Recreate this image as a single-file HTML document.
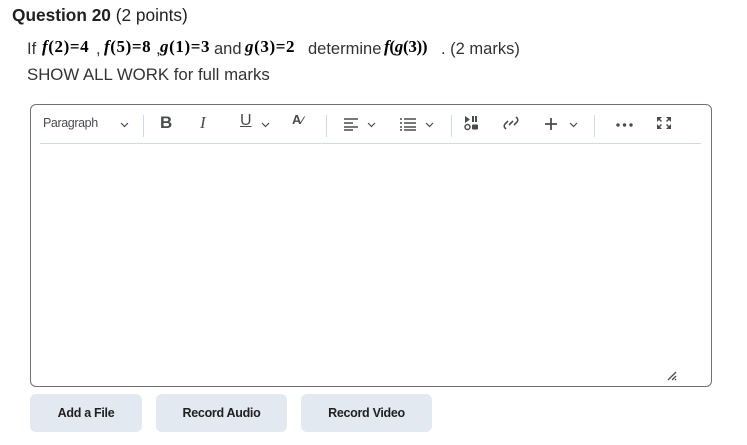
<!DOCTYPE html>
<html><head><meta charset="utf-8"><style>
*{margin:0;padding:0;box-sizing:border-box}
body{width:747px;height:445px;background:#fff;font-family:"Liberation Sans",sans-serif;color:#202122;position:relative;overflow:hidden}
.abs{position:absolute;white-space:nowrap}
.t{position:absolute;white-space:nowrap;top:40px;font-size:16.5px;color:#333}
.m{position:absolute;white-space:nowrap;top:37px;font-family:"Liberation Serif",serif;font-weight:bold;font-size:17px;color:#000;letter-spacing:0.6px}
.m i{font-style:italic}
.ed{position:absolute;left:30px;top:104px;width:682px;height:283px;border:1px solid #6e7376;border-radius:6px}
.sep{position:absolute;top:115px;width:1px;height:22px;background:#d3d9e3}
.btn{position:absolute;top:394px;height:38px;background:#e3e9f1;border-radius:6px;font-size:12.5px;font-weight:bold;color:#202122;display:flex;align-items:center;justify-content:center;letter-spacing:-0.3px}
.ic{position:absolute;color:#494c4e}
.ch{position:absolute;top:122px}
</style></head><body>
<div class="abs" style="left:12px;top:5px;font-size:17.3px"><b>Question 20</b> (2 points)</div>
<div class="t" style="left:27px">If</div>
<div class="m" style="left:42px"><i>f</i>(2)=4</div>
<div class="t" style="left:96px">,</div>
<div class="m" style="left:104px"><i>f</i>(5)=8</div>
<div class="t" style="left:156px">,</div>
<div class="m" style="left:160px"><i>g</i>(1)=3</div>
<div class="t" style="left:214px">and</div>
<div class="m" style="left:245px"><i>g</i>(3)=2</div>
<div class="t" style="left:308px">determine</div>
<div class="m" style="left:384px;letter-spacing:-0.3px"><i>f</i>(<i>g</i>(3))</div>
<div class="t" style="left:441px">. (2 marks)</div>
<div class="abs" style="left:27px;top:65px;font-size:16.8px;color:#333">SHOW ALL WORK for full marks</div>
<div class="ed"></div>
<div style="position:absolute;left:40px;top:143px;width:661px;height:1px;background:#d3d9e3"></div>
<div class="abs" style="left:43px;top:116px;font-size:12.5px;color:#494c4e;letter-spacing:-0.4px">Paragraph</div>
<svg class="ch" style="left:120px" width="9" height="6"><path d="M1 1l3.5 3.5L8 1" stroke="#494c4e" stroke-width="1.2" fill="none"/></svg>
<div class="sep" style="left:143px"></div>
<div class="abs" style="left:160px;top:113px;font-size:17px;font-weight:bold;color:#494c4e">B</div>
<div class="abs" style="left:200px;top:113px;font-size:17px;font-family:'Liberation Serif',serif;font-style:italic;color:#494c4e">I</div>
<div class="abs" style="left:240px;top:112px;font-size:16px;text-decoration:underline;color:#494c4e">U</div>
<svg class="ch" style="left:261px" width="9" height="6"><path d="M1 1l3.5 3.5L8 1" stroke="#494c4e" stroke-width="1.2" fill="none"/></svg>
<div class="abs" style="left:292px;top:112px;font-size:13px;font-weight:bold;color:#494c4e">A<span style="font-size:11px">⁄</span></div>
<div class="sep" style="left:326px"></div>
<svg class="ic" style="left:344px;top:117px" width="14" height="14"><path d="M0 2h14M0 6h9M0 10h14M0 13h9" stroke="#494c4e" stroke-width="1.5"/></svg>
<svg class="ch" style="left:367px" width="9" height="6"><path d="M1 1l3.5 3.5L8 1" stroke="#494c4e" stroke-width="1.2" fill="none"/></svg>
<svg class="ic" style="left:400px;top:117px" width="16" height="14"><path d="M4 2h12M4 6h12M4 10h12M4 13h12M0 2h2M0 6h2M0 10h2M0 13h2" stroke="#494c4e" stroke-width="1.5"/></svg>
<svg class="ch" style="left:425px" width="9" height="6"><path d="M1 1l3.5 3.5L8 1" stroke="#494c4e" stroke-width="1.2" fill="none"/></svg>
<div class="sep" style="left:451px"></div>
<svg class="ic" style="left:464px;top:115px" width="16" height="16"><path d="M1 1l5 3.5-5 3.5z" fill="#494c4e"/><path d="M9 1v6M12 1v6" stroke="#494c4e" stroke-width="2"/><circle cx="3.5" cy="12" r="2.5" fill="none" stroke="#494c4e" stroke-width="1.5"/><rect x="8" y="9.5" width="6" height="5" rx="1" fill="#494c4e"/></svg>
<svg class="ic" style="left:503px;top:115px" width="16" height="16"><path d="M3 14l-1-1a3 3 0 0 1 0-4l3-3M13 2l1 1a3 3 0 0 1 0 4l-3 3M6 10l4-4" stroke="#494c4e" stroke-width="1.6" fill="none"/></svg>
<svg class="ic" style="left:545px;top:118px" width="12" height="12"><path d="M6 0v12M0 6h12" stroke="#494c4e" stroke-width="1.8"/></svg>
<svg class="ch" style="left:569px" width="9" height="6"><path d="M1 1l3.5 3.5L8 1" stroke="#494c4e" stroke-width="1.2" fill="none"/></svg>
<div class="sep" style="left:594px"></div>
<svg class="ic" style="left:616px;top:123px" width="17" height="4"><circle cx="2" cy="2" r="1.7" fill="#494c4e"/><circle cx="8.5" cy="2" r="1.7" fill="#494c4e"/><circle cx="15" cy="2" r="1.7" fill="#494c4e"/></svg>
<svg class="ic" style="left:656px;top:116px" width="16" height="14"><path d="M1 1h5l-2 2 2 2-1 1-2-2-2 2zM15 1h-5l2 2-2 2 1 1 2-2 2 2zM1 13h5l-2-2 2-2-1-1-2 2-2-2zM15 13h-5l2-2-2-2 1-1 2 2 2-2z" fill="#494c4e"/></svg>
<svg style="position:absolute;left:664px;top:368px" width="14" height="14"><path d="M4 12L12 4M8 12L12 8M11 12l1-1" stroke="#494c4e" stroke-width="1.3"/></svg>
<div class="btn" style="left:30px;width:112px">Add a File</div>
<div class="btn" style="left:156px;width:131px">Record Audio</div>
<div class="btn" style="left:301px;width:131px">Record Video</div>
</body></html>
